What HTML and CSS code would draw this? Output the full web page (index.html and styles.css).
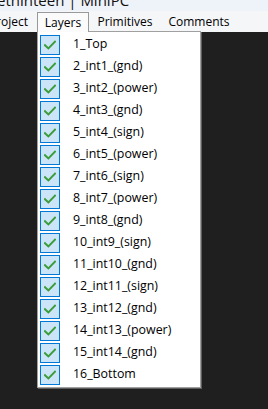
FILE: index.html
```html
<!DOCTYPE html>
<html>
<head>
<meta charset="utf-8">
<link rel="stylesheet" href="styles.css">
</head>
<body>
<div class="titlebar"><span class="title">ethinteen | MiniPC</span></div>
<div class="menubar">
  <span class="mi mi-project">Project</span>
  <span class="mi mi-layers">Layers</span>
  <span class="mi mi-prim">Primitives</span>
  <span class="mi mi-comm">Comments</span>
</div>
<div class="dropdown">
  <div class="row"><span class="cb"><svg viewBox="0 0 12 10" width="12" height="10"><path d="M1 5.2 L4.4 8.4 L11 1.6"/></svg></span><span class="lbl">1_Top</span></div>
  <div class="row"><span class="cb"><svg viewBox="0 0 12 10" width="12" height="10"><path d="M1 5.2 L4.4 8.4 L11 1.6"/></svg></span><span class="lbl">2_int1_(gnd)</span></div>
  <div class="row"><span class="cb"><svg viewBox="0 0 12 10" width="12" height="10"><path d="M1 5.2 L4.4 8.4 L11 1.6"/></svg></span><span class="lbl">3_int2_(power)</span></div>
  <div class="row"><span class="cb"><svg viewBox="0 0 12 10" width="12" height="10"><path d="M1 5.2 L4.4 8.4 L11 1.6"/></svg></span><span class="lbl">4_int3_(gnd)</span></div>
  <div class="row"><span class="cb"><svg viewBox="0 0 12 10" width="12" height="10"><path d="M1 5.2 L4.4 8.4 L11 1.6"/></svg></span><span class="lbl">5_int4_(sign)</span></div>
  <div class="row"><span class="cb"><svg viewBox="0 0 12 10" width="12" height="10"><path d="M1 5.2 L4.4 8.4 L11 1.6"/></svg></span><span class="lbl">6_int5_(power)</span></div>
  <div class="row"><span class="cb"><svg viewBox="0 0 12 10" width="12" height="10"><path d="M1 5.2 L4.4 8.4 L11 1.6"/></svg></span><span class="lbl">7_int6_(sign)</span></div>
  <div class="row"><span class="cb"><svg viewBox="0 0 12 10" width="12" height="10"><path d="M1 5.2 L4.4 8.4 L11 1.6"/></svg></span><span class="lbl">8_int7_(power)</span></div>
  <div class="row"><span class="cb"><svg viewBox="0 0 12 10" width="12" height="10"><path d="M1 5.2 L4.4 8.4 L11 1.6"/></svg></span><span class="lbl">9_int8_(gnd)</span></div>
  <div class="row"><span class="cb"><svg viewBox="0 0 12 10" width="12" height="10"><path d="M1 5.2 L4.4 8.4 L11 1.6"/></svg></span><span class="lbl">10_int9_(sign)</span></div>
  <div class="row"><span class="cb"><svg viewBox="0 0 12 10" width="12" height="10"><path d="M1 5.2 L4.4 8.4 L11 1.6"/></svg></span><span class="lbl">11_int10_(gnd)</span></div>
  <div class="row"><span class="cb"><svg viewBox="0 0 12 10" width="12" height="10"><path d="M1 5.2 L4.4 8.4 L11 1.6"/></svg></span><span class="lbl">12_int11_(sign)</span></div>
  <div class="row"><span class="cb"><svg viewBox="0 0 12 10" width="12" height="10"><path d="M1 5.2 L4.4 8.4 L11 1.6"/></svg></span><span class="lbl">13_int12_(gnd)</span></div>
  <div class="row"><span class="cb"><svg viewBox="0 0 12 10" width="12" height="10"><path d="M1 5.2 L4.4 8.4 L11 1.6"/></svg></span><span class="lbl">14_int13_(power)</span></div>
  <div class="row"><span class="cb"><svg viewBox="0 0 12 10" width="12" height="10"><path d="M1 5.2 L4.4 8.4 L11 1.6"/></svg></span><span class="lbl">15_int14_(gnd)</span></div>
  <div class="row"><span class="cb"><svg viewBox="0 0 12 10" width="12" height="10"><path d="M1 5.2 L4.4 8.4 L11 1.6"/></svg></span><span class="lbl">16_Bottom</span></div>
</div>
</body>
</html>
```
FILE: styles.css
```css
html, body {
  margin: 0;
  padding: 0;
}
body {
  width: 268px;
  height: 409px;
  overflow: hidden;
  background: #1f1f1f;
  font-family: "Open Sans", "Noto Sans", sans-serif;
  font-size: 12px;
  color: #000;
  position: relative;
}
.titlebar {
  height: 11px;
  background: #eef2f9;
  overflow: hidden;
}
.title {
  display: block;
  margin-top: -9px;
  margin-left: -3px;
  font-size: 15px;
  line-height: 18px;
  color: #111;
  white-space: nowrap;
}
.menubar {
  height: 21px;
  background: #f5f6f8;
  display: flex;
  align-items: stretch;
  white-space: nowrap;
  overflow: hidden;
}
.mi {
  display: flex;
  align-items: center;
  justify-content: center;
  flex: none;
  line-height: 20px;
  padding-top: 1px;
}
.mi-project {
  width: 37px;
  justify-content: flex-end;
  padding-right: 9px;
  box-sizing: border-box;
}
.mi-layers {
  width: 52px;
  box-sizing: border-box;
  margin-top: 1px;
  padding-top: 0;
  border: 1px solid #999;
  border-bottom: none;
  background: #fbfbfb;
  position: relative;
  z-index: 2;
}
.mi-prim {
  width: 72px;
}
.mi-comm {
  width: 76px;
}
.dropdown {
  position: absolute;
  left: 37px;
  top: 31px;
  width: 162px;
  padding: 2px 0 1px 0;
  background: #fff;
  border: 1px solid #a0a0a0;
  box-shadow: 1px 1px 0 #5d5d5d;
  z-index: 1;
}
.row {
  height: 22px;
  display: flex;
  align-items: center;
  padding-left: 2px;
}
.lbl {
  margin-left: 13px;
  white-space: nowrap;
  margin-top: -3px;
  font-size: 12.4px;
}
.cb {
  width: 18px;
  height: 18px;
  border: 1px solid #0078d7;
  background: #cce4f7;
  display: flex;
  align-items: center;
  justify-content: center;
  flex: none;
}
.cb svg {
  fill: none;
  stroke: #3a9d3a;
  stroke-width: 2;
  stroke-linecap: square;
}
```
